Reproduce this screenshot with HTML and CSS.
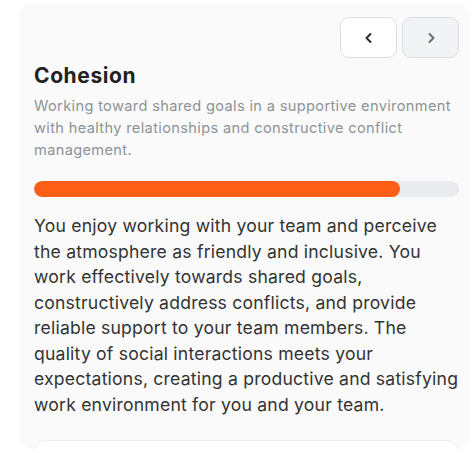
FILE: index.html
```html
<!DOCTYPE html>
<html>
<head>
<meta charset="utf-8">
<link rel="stylesheet" href="styles.css">
</head>
<body>
<div class="card">
  <div class="nav">
    <button class="btn btn-prev" aria-label="Previous">
      <svg width="14" height="14" viewBox="0 0 14 14"><path d="M8.5 3 L4.5 7 L8.5 11" fill="none" stroke="#2b2b2b" stroke-width="2" stroke-linecap="round" stroke-linejoin="round"/></svg>
    </button>
    <button class="btn btn-next" aria-label="Next">
      <svg width="14" height="14" viewBox="0 0 14 14"><path d="M5.5 3 L9.5 7 L5.5 11" fill="none" stroke="#6b7078" stroke-width="2" stroke-linecap="round" stroke-linejoin="round"/></svg>
    </button>
  </div>
  <h1 class="title">Cohesion</h1>
  <p class="desc">Working toward shared goals in a supportive environment with healthy relationships and constructive conflict management.</p>
  <div class="track"><div class="fill" style="width:86%"></div></div>
  <p class="body">You enjoy working with your team and perceive the atmosphere as friendly and inclusive. You work effectively towards shared goals, constructively address conflicts, and provide reliable support to your team members. The quality of social interactions meets your expectations, creating a productive and satisfying work environment for you and your team.</p>
  <div class="inner"></div>
</div>
</body>
</html>
```
FILE: styles.css
```css
html, body {
  margin: 0;
  padding: 0;
  background: #ffffff;
  overflow: hidden;
}
body {
  font-family: Inter, "Noto Sans", sans-serif;
  padding: 3px 0 0 19px;
}
.card {
  width: 451px;
  height: 446px;
  background: #fafafa;
  border-radius: 14px;
  padding: 14px 11px 0 15px;
  box-sizing: border-box;
  overflow: hidden;
}
.nav {
  display: flex;
  justify-content: flex-end;
  gap: 5px;
}
.btn {
  width: 57px;
  height: 41px;
  border: 1px solid #dcdee2;
  border-radius: 9px;
  background: #ffffff;
  display: flex;
  align-items: center;
  justify-content: center;
  padding: 0;
}
.btn-next {
  background: #f1f3f5;
}
.title {
  margin: 4px 0 0 0;
  font-size: 21px;
  font-weight: 700;
  color: #222222;
  line-height: 28px;
  letter-spacing: 0.6px;
}
.desc {
  margin: 5px 0 0 0;
  font-size: 14.6px;
  line-height: 22px;
  color: #8d9298;
  letter-spacing: 0.35px;
}
.track {
  margin-top: 20px;
  height: 16px;
  background: #e9ebee;
  border-radius: 8px;
  overflow: hidden;
}
.fill {
  height: 100%;
  background: #fd5e16;
  border-radius: 8px;
}
.body {
  margin: 16px 0 0 0;
  font-size: 17.6px;
  line-height: 25.5px;
  color: #333333;
  letter-spacing: 0.2px;
}
.inner {
  margin-top: 23px;
  height: 40px;
  background: #ffffff;
  border: 1px solid #ececec;
  border-radius: 12px;
  box-sizing: border-box;
}
```
